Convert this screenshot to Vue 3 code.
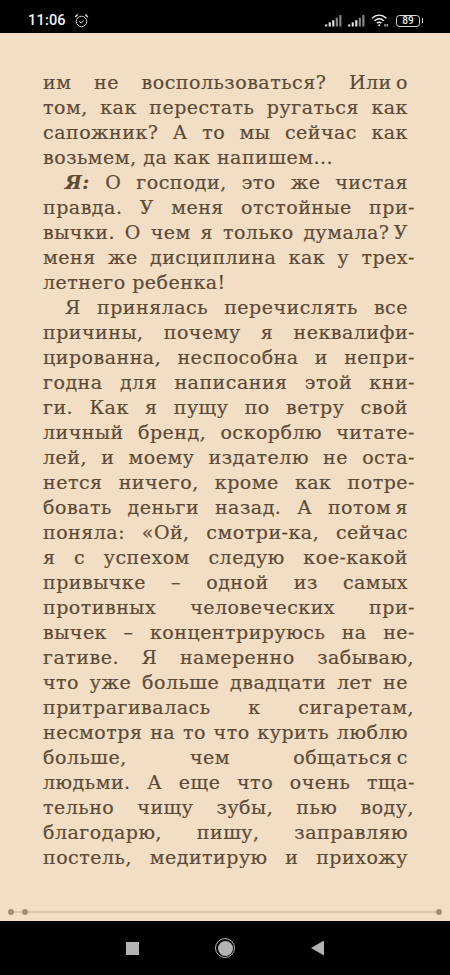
<script setup>
const paragraphs = [
  { lines: ['им не воспользоваться? Или\u2009о', 'том, как перестать ругаться как', 'сапожник? А то мы сейчас как'], last: 'возьмем, да как напишем...' },
  { lead: 'Я: ', lines: ['О господи, это же чистая', 'правда. У меня отстойные при-', 'вычки. О чем я только думала?\u2009У', 'меня же дисциплина как у трех-'], last: 'летнего ребенка!' },
  { lines: ['Я принялась перечислять все', 'причины, почему я неквалифи-', 'цированна, неспособна и непри-', 'годна для написания этой кни-', 'ги. Как я пущу по ветру свой', 'личный бренд, оскорблю читате-', 'лей, и моему издателю не оста-', 'нется ничего, кроме как потре-', 'бовать деньги назад. А потом\u2009я', 'поняла: «Ой, смотри-ка, сейчас', 'я с успехом следую кое-какой', 'привычке – одной из самых', 'противных человеческих при-', 'вычек – концентрируюсь на не-', 'гативе. Я намеренно забываю,', 'что уже больше двадцати лет не', 'притрагивалась к сигаретам,', 'несмотря на то что курить люблю', 'больше, чем общаться\u2009с', 'людьми. А еще что очень тща-', 'тельно чищу зубы, пью воду,', 'благодарю, пишу, заправляю', 'постель, медитирую и прихожу'], first: true }
]
const rows = []
paragraphs.forEach((p) => {
  p.lines.forEach((text, i) => {
    rows.push({
      text,
      lead: i === 0 ? p.lead : '',
      indent: i === 0 && (p.lead || p.first),
      hangHyphen: text.endsWith('-'),
      hangComma: text.endsWith(',')
    })
  })
  if (p.last) rows.push({ text: p.last, plain: true })
})
</script>

<template>
  <div class="screen">
    <header class="status">
      <span class="time">11:06</span>
      <svg class="alarm" viewBox="0 0 16 16" width="15" height="15" fill="none" stroke="#e4e4e4" stroke-width="1">
        <circle cx="8" cy="9" r="5.6" />
        <path d="M5.6 9l2 1.8 2.8-2.6" />
        <path d="M1.2 4.2L4 1.6M14.8 4.2L12 1.6" stroke-width="1.4" />
      </svg>
      <span class="spacer"></span>
      <svg class="signal" viewBox="0 0 16 12" width="17" height="12.5" fill="#e8e8e8">
        <rect x="0" y="10" width="2" height="2" />
        <rect x="3.4" y="8" width="2" height="4" />
        <rect x="6.8" y="6" width="2" height="6" />
        <rect x="10.2" y="3.5" width="2" height="8.5" fill="#8a8a8a" />
        <rect x="13.6" y="1" width="2" height="11" fill="#8a8a8a" />
      </svg>
      <svg class="signal" viewBox="0 0 16 12" width="17" height="12.5" fill="#e8e8e8">
        <rect x="0" y="10" width="2" height="2" />
        <rect x="3.4" y="8" width="2" height="4" />
        <rect x="6.8" y="6" width="2" height="6" />
        <rect x="10.2" y="3.5" width="2" height="8.5" fill="#8a8a8a" />
        <rect x="13.6" y="1" width="2" height="11" fill="#8a8a8a" />
      </svg>
      <svg class="wifi" viewBox="0 0 17.5 13" width="17.5" height="13" fill="none" stroke="#f0f0f0" stroke-width="1.5">
        <path d="M1 4.2C5.4 .4 11 .4 15.4 4.2" />
        <path d="M3.6 6.8C6.4 4.4 10 4.4 12.8 6.8" />
        <path d="M6 9.2c1.4-1.1 3-1.1 4.4 0" />
        <circle cx="8.2" cy="11.3" r="1" fill="#f0f0f0" stroke="none" />
        <path d="M14 10v2.6M16.2 10v2.6" stroke-width="1" />
      </svg>
      <span class="battery"><span class="level">89</span></span>
      <span class="nub"></span>
    </header>

    <main class="page">
      <div class="text">
        <div v-for="(row, i) in rows" :key="i" class="line" :class="{ indent: row.indent, plain: row.plain, hyphen: row.hangHyphen, comma: row.hangComma }"><i v-if="row.lead" class="lead">{{ row.lead }}</i>{{ row.text }}</div>
      </div>
      <div class="progress">
        <span class="dot"></span>
        <span class="dot second"></span>
        <span class="dot end"></span>
      </div>
    </main>

    <footer class="nav">
      <span class="square"></span>
      <span class="home"><span class="home-core"></span></span>
      <span class="back"></span>
    </footer>
  </div>
</template>

<style>
html, body { margin: 0; background: #000; }
</style>

<style scoped>
.screen {
  width: 450px;
  height: 975px;
  display: flex;
  flex-direction: column;
  overflow: hidden;
  background: #000;
}
.status {
  height: 33px;
  flex: none;
  display: flex;
  align-items: center;
  padding: 8px 27px 0 28px;
  box-sizing: border-box;
  color: #f2f2f2;
}
.time {
  font: 500 14.5px Roboto, sans-serif;
  letter-spacing: .2px;
}
.alarm { margin-left: 8px; }
.spacer { flex: 1; }
.signal { margin-right: 6px; }
.wifi { margin-right: 7.5px; }
.battery {
  width: 24px;
  height: 12px;
  border: 1.3px solid #d8d8d8;
  border-radius: 3.5px;
  box-sizing: border-box;
  display: flex;
  align-items: center;
  justify-content: center;
}
.level {
  font: 500 10px Roboto, sans-serif;
  color: #e8e8e8;
}
.nub {
  width: 1.5px;
  height: 5px;
  margin-left: 1.5px;
  background: #d8d8d8;
}
.page {
  flex: 1;
  position: relative;
  background: #f1dec5;
  padding: 37px 42px 0 43px;
  box-sizing: border-box;
}
.line {
  height: 25px;
  line-height: 25px;
  font-family: "DejaVu Serif", "Liberation Serif", serif;
  font-size: 19px;
  letter-spacing: .5px;
  color: #5d4a35;
  -webkit-text-stroke: .2px #5d4a35;
  text-align: justify;
  text-align-last: justify;
}
.line.plain {
  text-align-last: left;
}
.line.indent {
  text-indent: 22px;
}
.line.hyphen {
  margin-right: -7px;
}
.line.comma {
  margin-right: -6px;
}
.lead {
  font-weight: 700;
}
.progress {
  position: absolute;
  left: 10px;
  right: 10px;
  bottom: 8px;
  height: 2px;
  background: #dcc8ac;
}
.dot {
  position: absolute;
  top: -2px;
  left: -2.5px;
  width: 6px;
  height: 6px;
  border-radius: 50%;
  background: #a38e73;
}
.dot.second { left: 11.5px; }
.dot.end { left: auto; right: -1.5px; }
.nav {
  height: 54px;
  flex: none;
  background: #000;
  display: flex;
  align-items: center;
  justify-content: center;
  gap: 76px;
  box-sizing: border-box;
}
.square {
  width: 13px;
  height: 13px;
  background: #b3b3b3;
}
.home {
  width: 20px;
  height: 20px;
  box-sizing: border-box;
  border: 1px solid #b3b3b3;
  border-radius: 50%;
  display: flex;
  align-items: center;
  justify-content: center;
}
.home-core {
  width: 15px;
  height: 15px;
  border-radius: 50%;
  background: #b3b3b3;
}
.back {
  width: 13px;
  height: 15px;
  background: #b3b3b3;
  clip-path: polygon(100% 0, 100% 100%, 0 50%);
}
</style>
